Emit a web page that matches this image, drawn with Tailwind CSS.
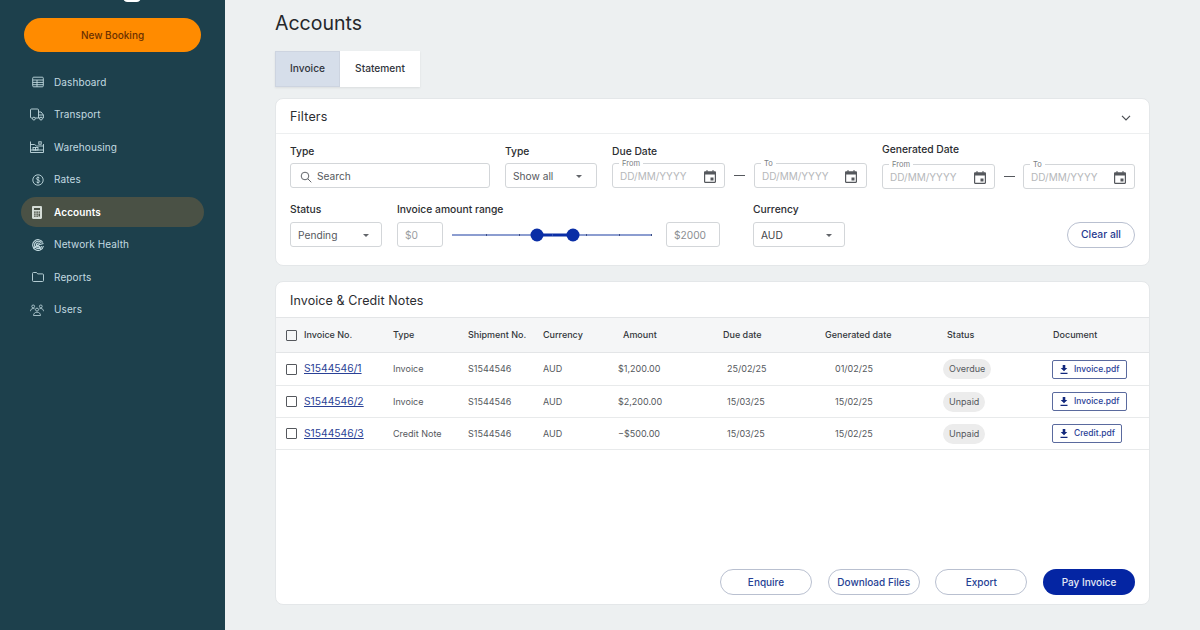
<!DOCTYPE html>
<html>
<head>
    <title>Accounts</title>
    <script src="https://cdn.jsdelivr.net/npm/@tailwindcss/browser@4"></script>
</head>
<body class="w-[1200px] h-[630px] overflow-hidden flex bg-[#edf0f1] font-['Inter',sans-serif] text-[#2b2d31] antialiased">

<!-- sidebar -->
<aside class="w-[225px] h-[630px] bg-[#1d404c] shrink-0 flex flex-col relative">
    <div class="absolute left-[123px] top-[-7px] w-[18px] h-[9px] rounded-full bg-white"></div>
    <button class="mt-[18px] ml-[24px] w-[177px] h-[34px] rounded-full bg-[#ff8b00] text-[#6b3000] text-[10px] font-medium">New Booking</button>
    <nav class="mt-[14px] ml-[21px] w-[183px] flex flex-col text-[10px] tracking-[0.1px] text-[#c3dbe1]">
        <a class="h-[32.5px] flex items-center pl-[10px] gap-[10px]">
            <svg class="w-[12px] h-[12px] ml-[0.5px] mr-[0.5px]" viewBox="0 0 12 12" fill="none" stroke="currentColor" stroke-width="0.9"><rect x="0.7" y="1.2" width="10.6" height="9.6" rx="1"/><path d="M0.7 4h10.6M0.7 6.4h10.6M0.7 8.7h10.6M5 4v6.8"/></svg>
            Dashboard
        </a>
        <a class="h-[32.5px] flex items-center pl-[9px] gap-[10px]">
            <svg class="w-[14px] h-[13px]" viewBox="0 0 14 13" fill="none" stroke="currentColor" stroke-width="0.9"><path d="M2.5 10H1.5a1 1 0 0 1-1-1V2a1 1 0 0 1 1-1h6a1 1 0 0 1 1 1v8H5.2"/><path d="M8.5 4h2.6l2.3 3v3h-1M10 10H8.5M8.5 7h4.9"/><circle cx="3.9" cy="10.6" r="1.4"/><circle cx="11" cy="10.6" r="1.4"/></svg>
            Transport
        </a>
        <a class="h-[32.5px] flex items-center pl-[9px] gap-[10px]">
            <svg class="w-[14px] h-[12px]" viewBox="0 0 14 12" fill="none" stroke="currentColor" stroke-width="0.9"><path d="M0.5 0.5v11h13V3M0.5 3.5h4l2 1.5h7M0.5 9h13"/><rect x="3" y="6.5" width="2.5" height="2.5"/><rect x="5.5" y="6.5" width="2.5" height="2.5"/><rect x="8.8" y="0.8" width="2.4" height="2.4"/></svg>
            Warehousing
        </a>
        <a class="h-[32.5px] flex items-center pl-[10px] gap-[10px]">
            <svg class="w-[12px] h-[12px] ml-[0.5px] mr-[0.5px]" viewBox="0 0 12 12" fill="none" stroke="currentColor" stroke-width="0.9"><circle cx="6" cy="6" r="5.2"/><path d="M7.6 4.3C7.3 3.6 6.7 3.3 6 3.3c-.9 0-1.6.5-1.6 1.3 0 1.7 3.3.9 3.3 2.7 0 .8-.8 1.4-1.7 1.4-.8 0-1.5-.4-1.8-1.1M6 2.5v7"/></svg>
            Rates
        </a>
        <a class="h-[30px] my-[1.25px] flex items-center pl-[11px] gap-[12px] rounded-full bg-[#4a5145] text-white font-semibold">
            <svg class="w-[10px] h-[13px] text-[#d5dcd6]" viewBox="0 0 10 13" fill="currentColor"><path fill-rule="evenodd" d="M1.2 0h7.6C9.5 0 10 .5 10 1.2v10.6c0 .7-.5 1.2-1.2 1.2H1.2C.5 13 0 12.500 0 11.800V1.200C0 .5.500 0 1.200 0ZM2 2v2h6V2ZM2 5.500v1.200h1.700V5.500ZM4.300 5.500v1.200H6V5.500ZM6.500 5.500v1.200H8V5.500ZM2 7.500v1.200h1.700V7.500ZM4.300 7.500v1.200H6V7.500ZM6.500 7.500v3h1.500v-3ZM2 9.500v1.200h1.700V9.500ZM4.300 9.500v1.200H6V9.500Z"/></svg>
            Accounts
        </a>
        <a class="h-[32.5px] flex items-center pl-[10px] gap-[10px]">
            <svg class="w-[12px] h-[12px] ml-[0.5px] mr-[0.5px]" viewBox="0 0 12 12" fill="none" stroke="currentColor" stroke-width="1.100"><path d="M10.800 3.400A5.400 5.400 0 1 0 11.400 7"/><path d="M9.300 3.900A3.700 3.700 0 1 0 9.700 7.200"/><path d="M7.800 4.500A2 2 0 1 0 8 7.200"/><path d="M6 6l5.500-1.500M6 6l3 5M6 6L1.500 9"/></svg>
            Network Health
        </a>
        <a class="h-[32.5px] flex items-center pl-[10px] gap-[10px]">
            <svg class="w-[12px] h-[12px] ml-[0.5px] mr-[0.5px]" viewBox="0 0 12 12" fill="none" stroke="currentColor" stroke-width="0.9"><path d="M1.500 1.500h3l1.200 1.400h4.800a1 1 0 0 1 1 1v5.600a1 1 0 0 1-1 1h-9a1 1 0 0 1-1-1V2.500a1 1 0 0 1 1-1Z"/></svg>
            Reports
        </a>
        <a class="h-[32.5px] flex items-center pl-[9px] gap-[10px]">
            <svg class="w-[14px] h-[12px]" viewBox="0 0 14 12" fill="none" stroke="currentColor" stroke-width="0.8"><circle cx="3.200" cy="2.400" r="1.400"/><circle cx="10.800" cy="2.400" r="1.400"/><circle cx="7" cy="5.600" r="1.500"/><path d="M0.500 7.200c0-1.500 1-2.700 2.700-2.700.6 0 1 .1 1.400.4M13.500 7.200c0-1.500-1-2.700-2.700-2.700-.6 0-1 .1-1.400.4M3.500 11.500c0-2 1.500-3.300 3.500-3.300s3.500 1.300 3.500 3.300Z"/></svg>
            Users
        </a>
    </nav>
</aside>

<!-- main -->
<main class="flex-1 pl-[50px] pr-[50px] min-w-0">
    <h1 class="mt-[11px] text-[19.5px] leading-[24px] text-[#25272b]">Accounts</h1>

    <div class="mt-[16px] flex w-[145px] h-[36px] text-[10.2px] font-medium shadow-[0_1px_2px_rgba(0,0,0,0.08)]">
        <div class="w-[65px] flex items-center justify-center bg-[#d6deea] border border-[#cdd4e0] text-[#30343c]">Invoice</div>
        <div class="w-[80px] flex items-center justify-center bg-white text-[#30343c]">Statement</div>
    </div>

    <!-- filters -->
    <section class="mt-[11px] h-[168px] bg-white rounded-[8px] border border-[#e4e7e9] box-border">
        <div class="h-[35px] pt-[3px] px-[14px] flex items-center justify-between border-b border-[#edeff0]">
            <h2 class="text-[12.5px] font-normal tracking-[0.2px] text-[#2b2d31]">Filters</h2>
            <svg class="w-[10px] h-[6px] mr-[4px]" viewBox="0 0 10 6" fill="none" stroke="#4a4d52" stroke-width="1.200"><path d="M1 0.800l4 4 4-4"/></svg>
        </div>
        <div class="pl-[14px] pr-[14px]">
            <div class="flex h-[57px] items-start">
                <div class="w-[200px] mt-[11px]">
                    <p class="text-[10.3px] leading-[13px] font-medium">Type</p>
                    <div class="mt-[5px] h-[25px] pt-[2px] rounded-[3px] border border-[#d3d6d9] flex items-center pl-[9px] gap-[5px] text-[10.2px] text-[#55585d]">
                        <svg class="w-[12px] h-[12px]" viewBox="0 0 12 12" fill="none" stroke="#62656a" stroke-width="1"><circle cx="5" cy="5" r="3.800"/><path d="M7.800 7.800l3.500 3.500"/></svg>
                        Search
                    </div>
                </div>
                <div class="w-[92px] ml-[15px] mt-[11px]">
                    <p class="text-[10.3px] leading-[13px] font-medium">Type</p>
                    <div class="mt-[5px] h-[25px] pt-[2px] rounded-[3px] border border-[#d3d6d9] flex items-center justify-between pl-[7px] pr-[14px] text-[10.2px] text-[#55585d]">
                        Show all
                        <span class="w-0 h-0 border-x-[3.500px] border-x-transparent border-t-[3.500px] border-t-[#62656a]"></span>
                    </div>
                </div>
                <div class="w-[255px] ml-[15px] mt-[11px]">
                    <p class="text-[10.3px] leading-[13px] font-medium">Due Date</p>
                    <div class="mt-[5px] flex items-center justify-between">
                        <div class="relative w-[113px] h-[25px] pt-[2px] rounded-[3px] border border-[#d3d6d9] flex items-center justify-between pl-[7px] pr-[8px] text-[10px] text-[#b5b7ba]">
                            <span class="absolute left-[6px] top-[-5px] px-[3px] bg-white text-[7.500px] leading-[9px] text-[#7b7e83]">From</span>
                            DD/MM/YYYY
                            <svg class="w-[12px] h-[13px]" viewBox="0 0 12 13" fill="#55585d"><path fill-rule="evenodd" d="M2.500 0h1v1.200h5V0h1v1.200h1.300c.7 0 1.200.5 1.200 1.200v9.400c0 .7-.5 1.200-1.200 1.200H1.200C.5 13 0 12.500 0 11.800V2.400C0 1.700.5 1.200 1.200 1.200h1.300ZM1.200 4.600v7.200h9.600V4.600ZM6.500 7.500h3v3h-3Z"/></svg>
                        </div>
                        <span class="w-[11px] h-[1px] bg-[#55585d]"></span>
                        <div class="relative w-[113px] h-[25px] pt-[2px] rounded-[3px] border border-[#d3d6d9] flex items-center justify-between pl-[7px] pr-[9px] text-[10px] text-[#b5b7ba]">
                            <span class="absolute left-[6px] top-[-5px] px-[3px] bg-white text-[7.500px] leading-[9px] text-[#7b7e83]">To</span>
                            DD/MM/YYYY
                            <svg class="w-[12px] h-[13px]" viewBox="0 0 12 13" fill="#55585d"><path fill-rule="evenodd" d="M2.500 0h1v1.200h5V0h1v1.200h1.300c.7 0 1.200.5 1.200 1.200v9.400c0 .7-.5 1.200-1.200 1.200H1.200C.5 13 0 12.500 0 11.800V2.400C0 1.700.5 1.200 1.200 1.200h1.300ZM1.200 4.600v7.200h9.600V4.600ZM6.500 7.500h3v3h-3Z"/></svg>
                        </div>
                    </div>
                </div>
                <div class="w-[253px] ml-[15px] mt-[9px]">
                    <p class="text-[10.3px] leading-[13px] font-medium">Generated Date</p>
                    <div class="mt-[8px] flex items-center justify-between">
                        <div class="relative w-[113px] h-[25px] pt-[1px] rounded-[3px] border border-[#d3d6d9] flex items-center justify-between pl-[7px] pr-[8px] text-[10px] text-[#b5b7ba]">
                            <span class="absolute left-[6px] top-[-5px] px-[3px] bg-white text-[7.500px] leading-[9px] text-[#7b7e83]">From</span>
                            DD/MM/YYYY
                            <svg class="w-[12px] h-[13px]" viewBox="0 0 12 13" fill="#55585d"><path fill-rule="evenodd" d="M2.500 0h1v1.200h5V0h1v1.200h1.300c.7 0 1.200.5 1.200 1.200v9.400c0 .7-.5 1.200-1.200 1.200H1.200C.5 13 0 12.500 0 11.800V2.400C0 1.700.5 1.200 1.200 1.200h1.300ZM1.200 4.600v7.200h9.600V4.600ZM6.500 7.500h3v3h-3Z"/></svg>
                        </div>
                        <span class="w-[11px] h-[1px] bg-[#55585d]"></span>
                        <div class="relative w-[112px] h-[25px] pt-[1px] rounded-[3px] border border-[#d3d6d9] flex items-center justify-between pl-[7px] pr-[8px] text-[10px] text-[#b5b7ba]">
                            <span class="absolute left-[6px] top-[-5px] px-[3px] bg-white text-[7.500px] leading-[9px] text-[#7b7e83]">To</span>
                            DD/MM/YYYY
                            <svg class="w-[12px] h-[13px]" viewBox="0 0 12 13" fill="#55585d"><path fill-rule="evenodd" d="M2.500 0h1v1.200h5V0h1v1.200h1.300c.7 0 1.200.5 1.200 1.200v9.400c0 .7-.5 1.200-1.200 1.200H1.200C.5 13 0 12.500 0 11.800V2.400C0 1.700.5 1.200 1.200 1.200h1.300ZM1.200 4.600v7.200h9.600V4.600ZM6.500 7.500h3v3h-3Z"/></svg>
                        </div>
                    </div>
                </div>
            </div>

            <div class="flex items-start mt-[12px]">
                <div class="w-[92px]">
                    <p class="text-[10.3px] leading-[13px] font-medium">Status</p>
                    <div class="mt-[6px] h-[25px] pt-[2px] rounded-[3px] border border-[#d3d6d9] flex items-center justify-between pl-[7px] pr-[12px] text-[10.2px] text-[#55585d]">
                        Pending
                        <span class="w-0 h-0 border-x-[3.500px] border-x-transparent border-t-[3.500px] border-t-[#62656a]"></span>
                    </div>
                </div>
                <div class="w-[323px] ml-[15px]">
                    <p class="text-[10.3px] leading-[13px] font-medium">Invoice amount range</p>
                    <div class="mt-[6px] flex items-center">
                        <div class="w-[46px] h-[25px] pt-[2px] rounded-[3px] border border-[#d3d6d9] flex items-center pl-[7px] text-[10.2px] text-[#9a9da1]">$0</div>
                        <svg class="w-[202px] h-[14px] ml-[8px] mt-[1px]" viewBox="0 0 202 14">
                            <rect x="1" y="6" width="200" height="2" fill="#8c9dd0"/>
                            <rect x="85" y="5.500" width="37" height="3" fill="#0a2ea6"/>
                            <g fill="#3d4f86"><rect x="35" y="6" width="1" height="2"/><rect x="68" y="6" width="1" height="2"/><rect x="135" y="6" width="1" height="2"/><rect x="168" y="6" width="1" height="2"/><rect x="200" y="6" width="1" height="2"/></g>
                            <rect x="101" y="6.500" width="1" height="1" fill="#5a72c0"/>
                            <circle cx="86" cy="7" r="6.500" fill="#0a2ea6"/>
                            <circle cx="122" cy="7" r="6.500" fill="#0a2ea6"/>
                        </svg>
                        <div class="w-[54px] h-[25px] pt-[2px] ml-[13px] rounded-[3px] border border-[#d3d6d9] flex items-center pl-[7px] text-[10.2px] text-[#8b8e92]">$2000</div>
                    </div>
                </div>
                <div class="w-[92px] ml-[33px]">
                    <p class="text-[10.3px] leading-[13px] font-medium">Currency</p>
                    <div class="mt-[6px] h-[25px] pt-[2px] rounded-[3px] border border-[#d3d6d9] flex items-center justify-between pl-[7px] pr-[12px] text-[10.2px] text-[#3f4247]">
                        AUD
                        <span class="w-0 h-0 border-x-[3.500px] border-x-transparent border-t-[3.500px] border-t-[#62656a]"></span>
                    </div>
                </div>
                <button class="ml-auto mt-[19px] w-[68px] h-[26px] rounded-full border border-[#b9c0d0] text-[10.3px] font-medium text-[#1f3a8f]">Clear all</button>
            </div>
        </div>
    </section>

    <!-- invoices -->
    <section class="mt-[15px] h-[324px] bg-white rounded-[8px] border border-[#e4e7e9] box-border flex flex-col overflow-hidden">
        <h2 class="h-[35px] pt-[4px] pl-[14px] flex items-center text-[12.5px] tracking-[0.1px] text-[#2b2d31]">Invoice &amp; Credit Notes</h2>
        <table class="table-fixed w-full text-[9px] text-[#55585d] border-collapse">
            <colgroup>
                <col class="w-[117px]"><col class="w-[75px]"><col class="w-[75px]"><col class="w-[65px]"><col class="w-[115px]"><col class="w-[102px]"><col class="w-[122px]"><col class="w-[106px]"><col>
            </colgroup>
            <thead class="bg-[#f5f6f7] border-y border-[#e3e5e7] text-[#33363b] font-medium">
                <tr class="h-[35px] text-left">
                    <th class="font-medium pl-[10px]"><span class="flex items-center gap-[7px]"><span class="w-[11px] h-[11px] border-[1.500px] border-[#55585d] rounded-[1px]"></span>Invoice No.</span></th>
                    <th class="font-medium">Type</th>
                    <th class="font-medium">Shipment No.</th>
                    <th class="font-medium">Currency</th>
                    <th class="font-medium pl-[15px]">Amount</th>
                    <th class="font-medium">Due date</th>
                    <th class="font-medium">Generated date</th>
                    <th class="font-medium">Status</th>
                    <th class="font-medium">Document</th>
                </tr>
            </thead>
            <tbody>
                <tr class="h-[33px] border-b border-[#e8eaeb]">
                    <td class="pl-[10px]"><span class="flex items-center gap-[7px]"><span class="w-[11px] h-[11px] border-[1.500px] border-[#55585d] rounded-[1px]"></span><a class="text-[10.300px] underline text-[#2a4196]">S1544546/1</a></span></td>
                    <td>Invoice</td><td>S1544546</td><td>AUD</td><td class="pl-[10px]">$1,200.00</td><td class="pl-[4px]">25/02/25</td><td class="pl-[10px]">01/02/25</td>
                    <td><span class="inline-flex items-center h-[20px] px-[6px] -ml-[4px] rounded-full bg-[#ececec]">Overdue</span></td>
                    <td><span class="inline-flex items-center gap-[6px] h-[19px] pl-[7px] pr-[6px] -ml-[1px] rounded-[2px] border border-[#5a6a9e] text-[8.500px] text-[#2a4196] font-medium"><svg class="w-[8px] h-[9px]" viewBox="0 0 8 9" fill="#12287c"><path d="M2.700 0h2.600v3h2L4 6.300.7 3h2ZM.5 7.800h7V9h-7Z"/></svg>Invoice.pdf</span></td>
                </tr>
                <tr class="h-[32px] border-b border-[#e8eaeb]">
                    <td class="pl-[10px]"><span class="flex items-center gap-[7px]"><span class="w-[11px] h-[11px] border-[1.500px] border-[#55585d] rounded-[1px]"></span><a class="text-[10.300px] underline text-[#2a4196]">S1544546/2</a></span></td>
                    <td>Invoice</td><td>S1544546</td><td>AUD</td><td class="pl-[10px]">$2,200.00</td><td class="pl-[4px]">15/03/25</td><td class="pl-[10px]">15/02/25</td>
                    <td><span class="inline-flex items-center h-[20px] px-[6px] -ml-[4px] rounded-full bg-[#ececec]">Unpaid</span></td>
                    <td><span class="inline-flex items-center gap-[6px] h-[19px] pl-[7px] pr-[6px] -ml-[1px] rounded-[2px] border border-[#5a6a9e] text-[8.500px] text-[#2a4196] font-medium"><svg class="w-[8px] h-[9px]" viewBox="0 0 8 9" fill="#12287c"><path d="M2.700 0h2.600v3h2L4 6.300.7 3h2ZM.5 7.800h7V9h-7Z"/></svg>Invoice.pdf</span></td>
                </tr>
                <tr class="h-[32px] border-b border-[#e8eaeb]">
                    <td class="pl-[10px]"><span class="flex items-center gap-[7px]"><span class="w-[11px] h-[11px] border-[1.500px] border-[#55585d] rounded-[1px]"></span><a class="text-[10.300px] underline text-[#2a4196]">S1544546/3</a></span></td>
                    <td>Credit Note</td><td>S1544546</td><td>AUD</td><td class="pl-[10px]">−$500.00</td><td class="pl-[4px]">15/03/25</td><td class="pl-[10px]">15/02/25</td>
                    <td><span class="inline-flex items-center h-[20px] px-[6px] -ml-[4px] rounded-full bg-[#ececec]">Unpaid</span></td>
                    <td><span class="inline-flex items-center gap-[6px] h-[19px] pl-[7px] pr-[6px] -ml-[1px] rounded-[2px] border border-[#5a6a9e] text-[8.500px] text-[#2a4196] font-medium"><svg class="w-[8px] h-[9px]" viewBox="0 0 8 9" fill="#12287c"><path d="M2.700 0h2.600v3h2L4 6.300.7 3h2ZM.5 7.800h7V9h-7Z"/></svg>Credit.pdf</span></td>
                </tr>
            </tbody>
        </table>
        <div class="mt-auto mb-[9px] mr-[14px] flex justify-end gap-[15.670px] text-[10px] font-medium text-[#263f94]">
            <button class="w-[92px] h-[26px] rounded-full border border-[#b9c0d0]">Enquire</button>
            <button class="w-[92px] h-[26px] rounded-full border border-[#b9c0d0]">Download Files</button>
            <button class="w-[92px] h-[26px] rounded-full border border-[#b9c0d0]">Export</button>
            <button class="w-[92px] h-[26px] rounded-full bg-[#0425a3] text-[#e4e9f6]">Pay Invoice</button>
        </div>
    </section>
</main>
</body>
</html>
